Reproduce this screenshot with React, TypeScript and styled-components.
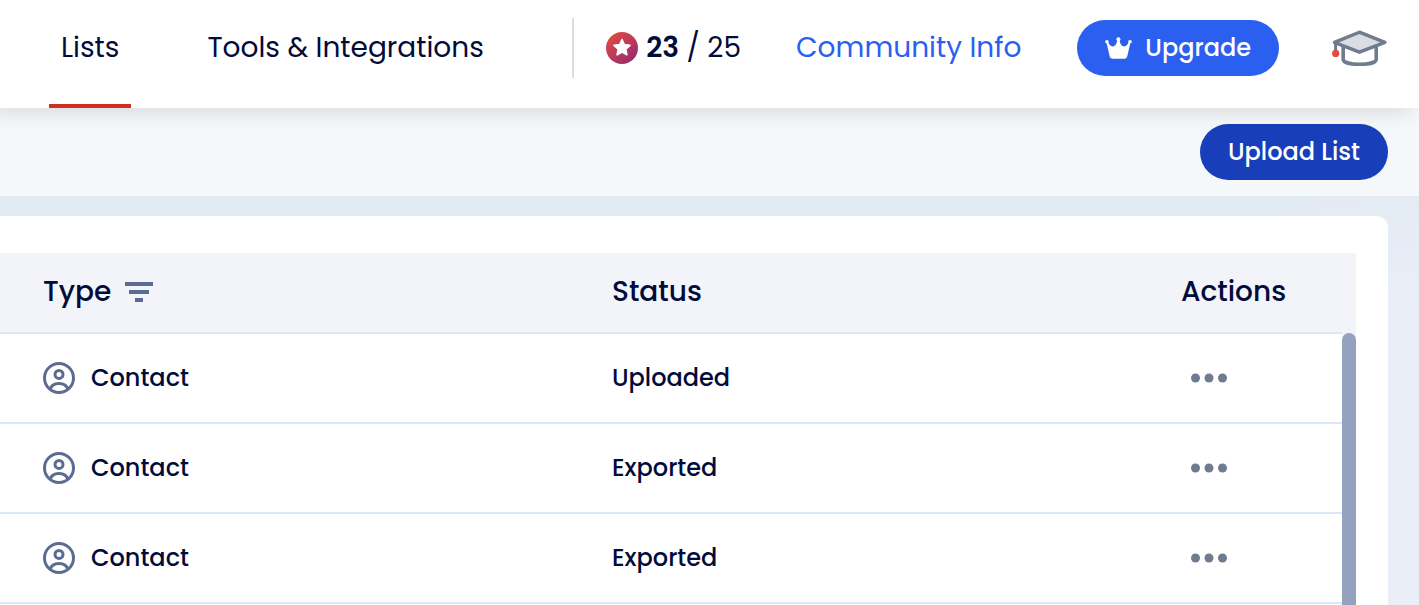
import React from 'react';
import styled, { createGlobalStyle } from 'styled-components';

const ink = '#020c3b';
const slate = '#5b6c90';
const gray = '#6f7c90';
const line = '#dbe6f7';

const GlobalStyle = createGlobalStyle`
  *, *::before, *::after { box-sizing: border-box; }
  body {
    margin: 0;
    color: ${ink};
    font-family: Poppins, Inter, "Liberation Sans", sans-serif;
    font-size: 24px;
    line-height: 36px;
  }
  button { font: inherit; border: 0; cursor: pointer; }
  a { text-decoration: none; }
  svg { display: block; flex: none; }
`;

const Page = styled.div`
  display: flex;
  flex-direction: column;
  height: 100vh;
  overflow: hidden;
  background: radial-gradient(circle at 100% 100%, #e9eef7 310px, #e2eaf2 430px);
`;

const TopBar = styled.header`
  position: relative;
  z-index: 1;
  flex: none;
  display: flex;
  align-items: center;
  justify-content: space-between;
  height: 108px;
  padding: 0 31px 12px 49px;
  background: #fff;
  box-shadow: -8px 4px 20px 0 rgba(0, 0, 0, 0.12);
  font-size: 28px;
`;

const Nav = styled.nav`
  display: flex;
  align-self: stretch;
  gap: 64px;
  margin-bottom: -12px;
`;

const NavLink = styled.a<{ $active?: boolean }>`
  display: flex;
  align-items: center;
  padding: 0 12px 8px;
  border-bottom: 4px solid ${(p) => (p.$active ? '#d0301f' : 'transparent')};
  color: ${ink};
`;

const Account = styled.div`
  display: flex;
  align-items: center;
`;

const Credits = styled.div`
  display: flex;
  align-items: center;
  gap: 8px;
  height: 60px;
  margin-right: 55px;
  padding-left: 32px;
  border-left: 2px solid #dcdde3;
  white-space: pre;
`;

const Used = styled.strong`
  font-weight: 600;
`;

const CommunityLink = styled.a`
  margin-right: 56px;
  color: #2b5ff0;
`;

const PillButton = styled.button<{ $tone: string }>`
  display: flex;
  align-items: center;
  gap: 13px;
  height: 56px;
  padding: 0 28px;
  border-radius: 28px;
  background: ${(p) => p.$tone};
  color: #fff;
  font-size: 24px;
  font-weight: 500;
`;

const LearnLink = styled.a`
  margin-left: 53px;
`;

const Toolbar = styled.div`
  flex: none;
  display: flex;
  justify-content: flex-end;
  padding: 16px 31px;
  background: #f4f8fb;
`;

const Card = styled.main`
  flex: 1;
  min-height: 0;
  display: flex;
  margin: 20px 31px 0 0;
  padding: 37px 32px 0 0;
  border-radius: 0 12px 0 0;
  background: #fff;
`;

const Table = styled.table`
  flex: 1;
  align-self: flex-start;
  table-layout: fixed;
  border-collapse: separate;
  border-spacing: 0;
`;

const HeadCell = styled.th<{ $width?: string }>`
  width: ${(p) => p.$width ?? 'auto'};
  height: 81px;
  padding: 0 0 2px 43px;
  border-bottom: 2px solid ${line};
  background: #f3f4f9;
  font-size: 28px;
  font-weight: 500;
  text-align: left;
`;

const Cell = styled.td`
  height: 90px;
  padding: 0 0 0 43px;
  border-bottom: 2px solid ${line};
  font-weight: 500;
`;

const Labelled = styled.div<{ $gap: number }>`
  display: flex;
  align-items: center;
  gap: ${(p) => p.$gap}px;
`;

const FilterButton = styled.button`
  padding: 0;
  background: none;
`;

const MoreButton = styled.button`
  display: flex;
  align-items: center;
  justify-content: center;
  width: 56px;
  height: 40px;
  padding: 0;
  background: none;
`;

const Gutter = styled.div`
  flex: none;
  display: flex;
  flex-direction: column;
  width: 14px;
`;

const GutterHead = styled.div`
  height: 87px;
  margin-bottom: -7px;
  background: #f3f4f9;
`;

const Thumb = styled.div`
  flex: 1;
  border-radius: 7px 7px 0 0;
  background: #95a2bf;
`;

const StarBadge = () => (
  <svg width="32" height="32" viewBox="0 0 32 32" aria-hidden="true">
    <defs>
      <linearGradient id="badge" x1="0.1" y1="0.1" x2="0.85" y2="0.95">
        <stop offset="0" stopColor="#df4c42" />
        <stop offset="1" stopColor="#992a70" />
      </linearGradient>
    </defs>
    <circle cx="16" cy="16" r="16" fill="url(#badge)" />
    <path
      d="M16 7.6 18.3 12.6 24 13.4 19.8 17.2 20.9 22.8 16 20 11.1 22.8 12.2 17.2 8 13.4 13.7 12.6Z"
      fill="#fff"
      stroke="#fff"
      strokeWidth="1.6"
      strokeLinejoin="round"
    />
  </svg>
);

const Crown = () => (
  <svg width="27" height="22" viewBox="0 0 27 22" fill="#fff" aria-hidden="true">
    <circle cx="1.9" cy="4.8" r="1.8" />
    <circle cx="13.4" cy="2.2" r="2" />
    <circle cx="25" cy="4.8" r="1.8" />
    <path d="M1.5 5.5 2.9 4.6C4 7.8 5.6 9.4 7.4 9.4 10 9.4 11.8 7 12.2 3H14.6C15 7 16.8 9.4 19.4 9.4 21.2 9.4 22.9 7.8 24 4.6L25.4 5.5 22.4 18.8Q21.8 21.8 19.4 21.8H7.5Q5.1 21.8 4.5 18.8Z" />
  </svg>
);

const GradCap = () => (
  <svg width="56" height="38" viewBox="0 0 56 38" fill="none" aria-hidden="true">
    <path d="M11.2 17V30.2C11.2 37 44.2 37 44.2 30.2V17" stroke={gray} strokeWidth="3.6" />
    <path d="M3.6 15V22" stroke={gray} strokeWidth="3" />
    <path
      d="M2.4 13.4 27.4 3.2 52.9 13.4 27.4 23.2Z"
      fill="#dcdde2"
      stroke={gray}
      strokeWidth="3.4"
      strokeLinejoin="round"
    />
    <circle cx="3.7" cy="24.4" r="3.6" fill="#e54b3e" />
  </svg>
);

const FilterIcon = () => (
  <svg width="28" height="20" viewBox="0 0 28 20" fill={slate} aria-hidden="true">
    <path d="M0 0H28V4H0ZM4 8H24V12H4ZM10 16H18V20H10Z" />
  </svg>
);

const Person = () => (
  <svg width="32" height="32" viewBox="0 0 32 32" fill="none" stroke={slate} strokeWidth="3" aria-hidden="true">
    <circle cx="16" cy="16" r="14.5" />
    <circle cx="16" cy="12.4" r="4" />
    <path d="M7.2 27.2C8.2 23.4 11.2 21.4 16 21.4S23.8 23.4 24.8 27.2" />
  </svg>
);

const Dots = () => (
  <svg width="36" height="10" viewBox="0 0 36 10" fill={gray} aria-hidden="true">
    <circle cx="4.5" cy="5" r="4.5" />
    <circle cx="18" cy="5" r="4.5" />
    <circle cx="31.5" cy="5" r="4.5" />
  </svg>
);

const rows = [
  { id: 1, type: 'Contact', status: 'Uploaded' },
  { id: 2, type: 'Contact', status: 'Exported' },
  { id: 3, type: 'Contact', status: 'Exported' },
];

export default function App() {
  return (
    <Page>
      <GlobalStyle />
      <TopBar>
        <Nav>
          <NavLink href="#lists" $active>Lists</NavLink>
          <NavLink href="#tools">Tools &amp; Integrations</NavLink>
        </Nav>
        <Account>
          <Credits>
            <StarBadge />
            <span><Used>23</Used> / 25</span>
          </Credits>
          <CommunityLink href="#community">Community Info</CommunityLink>
          <PillButton type="button" $tone="#2b5ff0">
            <Crown />
            Upgrade
          </PillButton>
          <LearnLink href="#learn" aria-label="Learning center">
            <GradCap />
          </LearnLink>
        </Account>
      </TopBar>
      <Toolbar>
        <PillButton type="button" $tone="#183fb9">Upload List</PillButton>
      </Toolbar>
      <Card>
        <Table>
          <thead>
            <tr>
              <HeadCell $width="42.4%">
                <Labelled $gap={14}>
                  Type
                  <FilterButton type="button" aria-label="Filter by type">
                    <FilterIcon />
                  </FilterButton>
                </Labelled>
              </HeadCell>
              <HeadCell $width="42.4%">Status</HeadCell>
              <HeadCell>Actions</HeadCell>
            </tr>
          </thead>
          <tbody>
            {rows.map((row) => (
              <tr key={row.id}>
                <Cell>
                  <Labelled $gap={16}>
                    <Person />
                    {row.type}
                  </Labelled>
                </Cell>
                <Cell>{row.status}</Cell>
                <Cell>
                  <MoreButton type="button" aria-label="More actions">
                    <Dots />
                  </MoreButton>
                </Cell>
              </tr>
            ))}
          </tbody>
        </Table>
        <Gutter>
          <GutterHead />
          <Thumb />
        </Gutter>
      </Card>
    </Page>
  );
}
